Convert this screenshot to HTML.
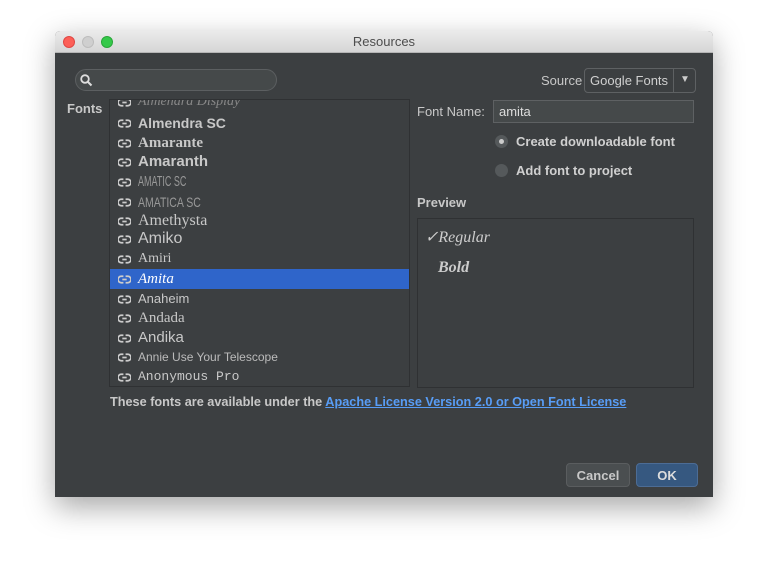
<!DOCTYPE html>
<html><head><meta charset="utf-8"><style>
*{margin:0;padding:0;box-sizing:border-box}
body{width:768px;height:576px;background:#fff;position:relative;overflow:hidden;font-family:"Liberation Sans",sans-serif;font-size:13px;color:#bbbbbb}
.win{position:absolute;left:55px;top:31px;width:658px;height:466px;background:#3c3f41;box-shadow:0 10px 30px rgba(0,0,0,.35);border-radius:5px 5px 0 0;overflow:hidden}
.title{position:absolute;left:0;top:0;width:658px;height:22px;background:linear-gradient(#ebebeb,#d6d6d6);border-bottom:1px solid #b5b5b5;text-align:center;line-height:22px;color:#4d4d4d;font-size:13px}
.dot{position:absolute;top:5px;width:12px;height:12px;border-radius:50%}
.a{position:absolute}
.list{left:54px;top:68px;width:301px;height:288px;background:#3c3f41;border:1px solid #2f3133;overflow:hidden}
.row{position:absolute;left:0;width:299px;height:20px;line-height:20px;padding-left:28px;color:#c8c8c8;font-size:14px;white-space:nowrap}
.row svg{position:absolute;left:8px;top:6px}
.sel{background:#2f65ca;color:#fff}
.btn{position:absolute;height:24px;border-radius:4px;text-align:center;line-height:23px;font-weight:bold;font-size:13px}
.cond{display:inline-block;transform:scaleX(.6);transform-origin:left}
</style></head><body>
<div class="win">
 <div class="title">Resources
  <div class="dot" style="left:8px;background:#fc5f57;border:1px solid #df4744"></div>
  <div class="dot" style="left:27px;background:#cfcfcf;border:1px solid #bdbdbd"></div>
  <div class="dot" style="left:46px;background:#35c94a;border:1px solid #2aa63a"></div>
 </div>
 <div class="a" style="left:20px;top:38px;width:202px;height:22px;border:1px solid #5c5f61;border-radius:11px;background:#45494a"></div>
 <svg class="a" style="left:25px;top:43px" width="13" height="13" viewBox="0 0 13 13"><circle cx="5" cy="5" r="3.8" fill="none" stroke="#ddd" stroke-width="1.8"/><path d="M8 8L11.5 11.5" stroke="#ddd" stroke-width="2"/></svg>
 <div class="a" style="left:486px;top:42px;color:#c8c8c8">Source</div>
 <div class="a" style="left:529px;top:37px;width:112px;height:25px;border:1px solid #5e6163;border-radius:4px;background:#3c3f41"></div>
 <div class="a" style="left:535px;top:42px;color:#d0d0d0">Google Fonts</div>
 <div class="a" style="left:618px;top:38px;width:1px;height:23px;background:#5e6163"></div>
 <div class="a" style="left:625px;top:43px;color:#ccc;font-size:10px">▼</div>
 <div class="a" style="left:12px;top:70px;color:#c8c8c8;font-weight:bold">Fonts</div>
 <div class="a list">
  <div class="row" style="top:-8px;color:#888;font-family:'Liberation Serif',serif;font-style:italic">Almendra Display</div>
  <div class="row" style="top:13px;font-weight:bold">Almendra SC</div>
  <div class="row" style="top:33px;font-family:'Liberation Serif',serif;font-weight:bold;font-size:15px">Amarante</div>
  <div class="row" style="top:52px;font-weight:bold;font-size:15px">Amaranth</div>
  <div class="row" style="top:72px;color:#999;font-size:15px"><span class="cond">AMATIC SC</span></div>
  <div class="row" style="top:92px;color:#999;font-size:14px"><span class="cond" style="transform:scaleX(.75)">AMATICA SC</span></div>
  <div class="row" style="top:111px;font-family:'Liberation Serif',serif;font-size:16px">Amethysta</div>
  <div class="row" style="top:129px;font-size:16px">Amiko</div>
  <div class="row" style="top:149px;font-family:'Liberation Serif',serif">Amiri</div>
  <div class="row sel" style="top:169px;font-family:'Liberation Serif',serif;font-style:italic;font-size:15px">Amita</div>
  <div class="row" style="top:189px;font-size:13px">Anaheim</div>
  <div class="row" style="top:208px;font-family:'Liberation Serif',serif;font-size:15px">Andada</div>
  <div class="row" style="top:228px;font-size:15px">Andika</div>
  <div class="row" style="top:247px;font-size:12px;color:#bbb">Annie Use Your Telescope</div>
  <div class="row" style="top:267px;font-family:'Liberation Mono',monospace;font-size:13px">Anonymous Pro</div>
 </div>
 <div class="a" style="left:362px;top:73px;color:#c8c8c8">Font Name:</div>
 <div class="a" style="left:438px;top:69px;width:201px;height:23px;border:1px solid #5e6163;background:#45494a;padding:3px 5px;color:#ddd">amita</div>
 <div class="a" style="left:440px;top:104px;width:13px;height:13px;border-radius:50%;background:#55595b"><div style="margin:4px;width:5px;height:5px;border-radius:50%;background:#ccc"></div></div>
 <div class="a" style="left:461px;top:103px;color:#d0d0d0;font-weight:bold">Create downloadable font</div>
 <div class="a" style="left:440px;top:133px;width:13px;height:13px;border-radius:50%;background:#55595b"></div>
 <div class="a" style="left:461px;top:132px;color:#d0d0d0;font-weight:bold">Add font to project</div>
 <div class="a" style="left:362px;top:164px;color:#c8c8c8;font-weight:bold">Preview</div>
 <div class="a" style="left:362px;top:187px;width:277px;height:170px;border:1px solid #2f3133"></div>
 <div class="a" style="left:370px;top:196px;color:#ccc;font-family:'Liberation Serif',serif;font-style:italic;font-size:16px">✓Regular</div>
 <div class="a" style="left:383px;top:228px;color:#ccc;font-family:'Liberation Serif',serif;font-style:italic;font-weight:bold;font-size:16px">Bold</div>
 <div class="a" style="left:55px;top:364px;color:#c8c8c8;font-weight:bold;font-size:12.7px">These fonts are available under the <span style="color:#589df6;text-decoration:underline">Apache License Version 2.0 or Open Font License</span></div>
 <div class="btn" style="left:511px;top:432px;width:64px;background:#4a4e50;border:1px solid #5a5d5f;color:#c8c8c8">Cancel</div>
 <div class="btn" style="left:581px;top:432px;width:62px;background:#365880;border:1px solid #4c6c95;color:#ddd">OK</div>
</div>
<svg width="0" height="0" style="position:absolute"><defs><symbol id="l" viewBox="0 0 12 8"><path d="M5 1H3a3 3 0 0 0 0 6h2M7 1h2a3 3 0 0 1 0 6H7M4 4h4" fill="none" stroke="#ccc" stroke-width="1.6"/></symbol></defs></svg>
<script>
document.querySelectorAll('.row').forEach(r=>{r.insertAdjacentHTML('afterbegin','<svg width="13" height="9"><use href="#l"/></svg>')});
</script>
</body></html>
